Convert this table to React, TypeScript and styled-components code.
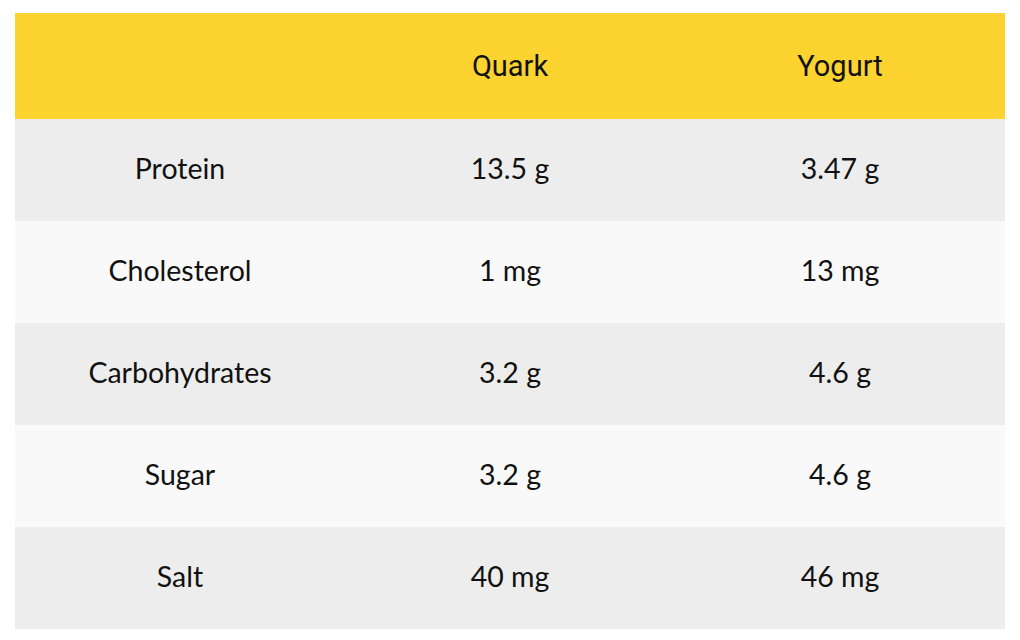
import React from "react";
import styled, { createGlobalStyle } from "styled-components";

const Global = createGlobalStyle`
  html, body { margin: 0; padding: 0; background: #ffffff; }
`;

const Wrap = styled.div`
  padding: 13px 15px;
`;

const Table = styled.table`
  width: 990px;
  border-collapse: collapse;
  table-layout: fixed;
`;

const HeadRow = styled.tr`
  background: #fdd32f;
  height: 106px;
`;

const Th = styled.th`
  font-family: Roboto, "Liberation Sans", sans-serif;
  font-weight: 400;
  font-size: 29px;
  color: #111;
  text-align: center;
  padding: 0 0 1px 0;
  width: 330px;
`;

const Row = styled.tr<{ $alt: boolean }>`
  background: ${(p) => (p.$alt ? "#f9f9f9" : "#ededed")};
  height: 102px;
`;

const Td = styled.td`
  font-family: Lato, "Noto Sans", sans-serif;
  font-size: 28.5px;
  color: #111;
  text-align: center;
  padding: 0 0 4px 0;
`;

const rows = [
  ["Protein", "13.5 g", "3.47 g"],
  ["Cholesterol", "1 mg", "13 mg"],
  ["Carbohydrates", "3.2 g", "4.6 g"],
  ["Sugar", "3.2 g", "4.6 g"],
  ["Salt", "40 mg", "46 mg"],
];

export default function App() {
  return (
    <Wrap>
      <Global />
      <Table>
        <thead>
          <HeadRow>
            <Th></Th>
            <Th>Quark</Th>
            <Th>Yogurt</Th>
          </HeadRow>
        </thead>
        <tbody>
          {rows.map((r, i) => (
            <Row key={r[0]} $alt={i % 2 === 1}>
              {r.map((c, j) => (
                <Td key={j}>{c}</Td>
              ))}
            </Row>
          ))}
        </tbody>
      </Table>
    </Wrap>
  );
}
